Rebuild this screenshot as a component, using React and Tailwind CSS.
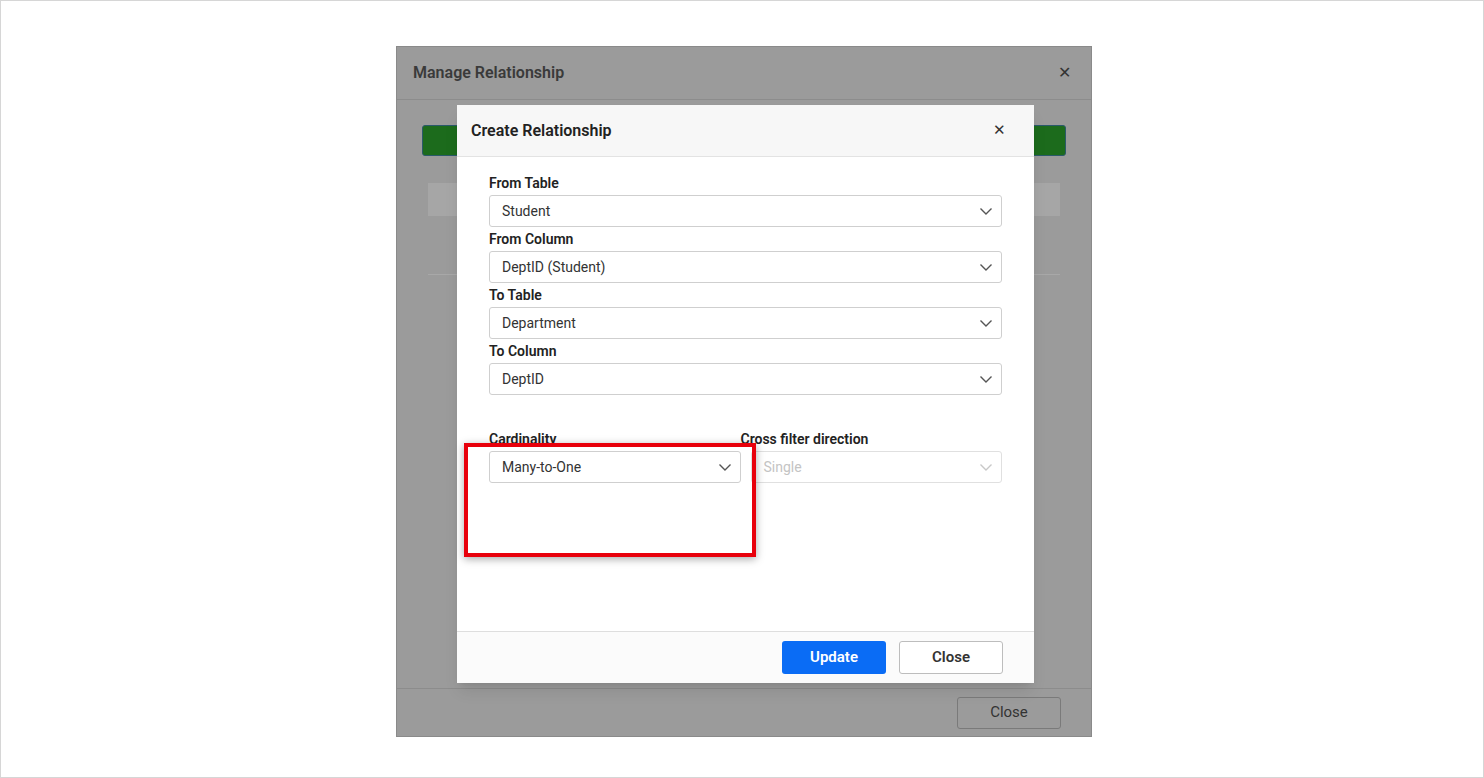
import React from "react";

const Chev = ({ c = "#555" }) => (
  <svg width="14" height="14" viewBox="0 0 14 14" fill="none"><path d="M1.5 4.5L7 10l5.5-5.5" stroke={c} strokeWidth="1.4" /></svg>
);

const Field = ({ label, value, top }) => (
  <div className="flex flex-col">
    <div className="text-[14px] font-semibold text-[#222] h-[20px] leading-[20px] mb-[2px]">{label}</div>
    <div className="h-[32px] border border-[#cfcfcf] rounded-[3px] flex items-center justify-between pl-3 pr-2 text-[14px] text-[#333]">
      <span>{value}</span><Chev />
    </div>
  </div>
);

export default function App() {
  return (
    <div className="w-[1484px] h-[778px] bg-white border border-[#d6d6d6] relative overflow-hidden" style={{ fontFamily: "Roboto, 'Liberation Sans', sans-serif" }}>
      {/* background modal */}
      <div className="absolute left-[395px] top-[45px] w-[696px] h-[691px] bg-[#9b9b9b] border border-[#8a8a8a] flex flex-col">
        <div className="h-[53px] flex items-center justify-between px-4 border-b border-[#8c8c8c]">
          <span className="text-[16px] font-semibold text-[#3a3a3a]">Manage Relationship</span>
          <span className="text-[16px] text-[#333] mr-1">✕</span>
        </div>
        <div className="px-[25px] pt-[25px]">
          <div className="h-[31px] bg-[#1c6b1c] border border-[#2a5a6a] rounded-[3px]" />
          <div className="h-[33px] bg-[#a6a6a6] mt-[27px] mx-[6px]" />
          <div className="h-px bg-[#a8a8a8] mt-[58px] mx-[6px]" />
        </div>
        <div className="flex-1" />
        <div className="h-[48px] border-t border-[#8c8c8c] flex items-center justify-end pr-[30px]">
          <div className="w-[104px] h-[32px] border border-[#7a7a7a] rounded-[3px] flex items-center justify-center text-[15px] text-[#333]">Close</div>
        </div>
      </div>
      {/* dialog */}
      <div className="absolute left-[456px] top-[104px] w-[577px] h-[578px] bg-white flex flex-col shadow-lg">
        <div className="h-[52px] bg-[#f7f7f7] border-b border-[#e3e3e3] flex items-center justify-between px-[14px]">
          <span className="text-[16px] font-semibold text-[#222]">Create Relationship</span>
          <span className="text-[15px] text-[#333] mr-[14px]">✕</span>
        </div>
        <div className="flex-1 px-[32px] pt-[16px] flex flex-col gap-[2px]">
          <Field label="From Table" value="Student" />
          <Field label="From Column" value="DeptID (Student)" />
          <Field label="To Table" value="Department" />
          <Field label="To Column" value="DeptID" />
          <div className="grid grid-cols-2 gap-[10px] mt-[32px]">
            <Field label="Cardinality" value="Many-to-One" />
            <div className="flex flex-col">
              <div className="text-[14px] font-semibold text-[#222] h-[20px] leading-[20px] mb-[2px] -ml-[10px]">Cross filter direction</div>
              <div className="h-[32px] border border-[#e0e0e0] rounded-[3px] flex items-center justify-between pl-3 pr-2 text-[14px] text-[#c4c4c4]">
                <span>Single</span><Chev c="#c8c8c8" />
              </div>
            </div>
          </div>
        </div>
        <div className="h-[52px] border-t border-[#dedede] bg-[#fbfbfb] flex items-center justify-end gap-[13px] pr-[31px]">
          <div className="w-[104px] h-[33px] bg-[#0a6cf5] rounded-[3px] flex items-center justify-center text-[15px] font-semibold text-white">Update</div>
          <div className="w-[104px] h-[33px] bg-white border border-[#bdbdbd] rounded-[3px] flex items-center justify-center text-[15px] font-semibold text-[#333]">Close</div>
        </div>
      </div>
      {/* highlight */}
      <div className="absolute left-[463px] top-[442px] w-[292px] h-[114px] border-[4px] border-[#e8000b] shadow-[0_2px_8px_rgba(0,0,0,0.35)]" />
    </div>
  );
}
